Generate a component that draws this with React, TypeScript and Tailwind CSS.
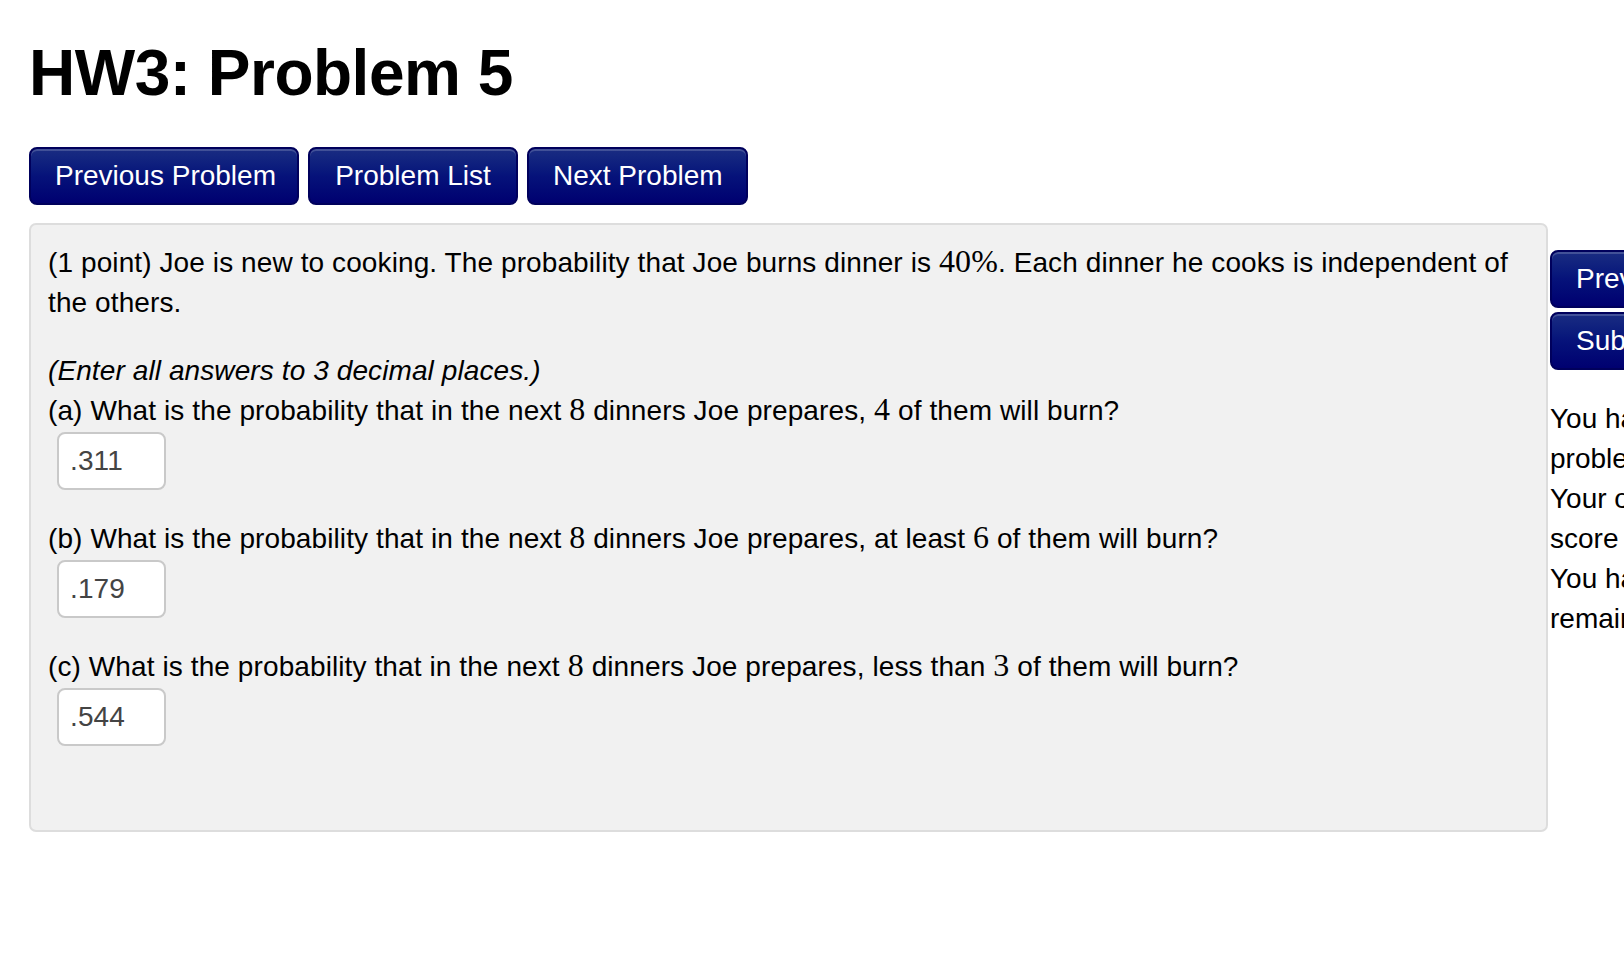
import React from "react";

const btn =
  "h-[58px] px-[24px] text-[28px] leading-[34px] text-white rounded-[8px] border-2 border-[#00005c] bg-linear-to-b from-[#1a2c82] via-[#06127a] to-[#000070] shadow-[inset_0_2px_0_rgba(255,255,255,0.18)] whitespace-nowrap";

function M({ children }: { children: React.ReactNode }) {
  return (
    <span className="text-[32px] leading-none" style={{ fontFamily: '"Liberation Serif", "DejaVu Serif", serif' }}>
      {children}
    </span>
  );
}

function Answer({ value }: { value: string }) {
  return (
    <div className="ml-[9px] mt-[1px] w-[109px] h-[58px] rounded-[8px] border-2 border-[#c9c9c9] bg-white flex items-center pl-[11px] text-[28px] text-[#444]">
      {value}
    </div>
  );
}

export default function App() {
  return (
    <div
      className="w-[1624px] h-[954px] overflow-hidden bg-white text-black"
      style={{ fontFamily: '"Liberation Sans", Arial, Helvetica, sans-serif' }}
    >
      <div className="pl-[29px] flex flex-col">
        <h1 className="mt-[41px] text-[64px] leading-[64px] font-bold tracking-[-0.5px]">HW3: Problem 5</h1>
        <div className="mt-[42px] flex gap-[9px]">
          <button className={btn + " w-[270px]"}>Previous Problem</button>
          <button className={btn + " w-[210px]"}>Problem List</button>
          <button className={btn + " w-[221px]"}>Next Problem</button>
        </div>
        <div className="mt-[18px] flex items-start">
          <div className="w-[1519px] h-[609px] shrink-0 bg-[#f1f1f1] border-2 border-[#dddddd] rounded-[7px] pt-[18px] px-[17px] text-[28px] leading-[40px] tracking-[0.1px]">
            <p>
              (1 point) Joe is new to cooking. The probability that Joe burns dinner is <M>40%</M>. Each dinner he cooks is independent of
              <br />
              the others.
            </p>
            <p className="mt-[28px] italic">(Enter all answers to 3 decimal places.)</p>
            <p>
              (a) What is the probability that in the next <M>8</M> dinners Joe prepares, <M>4</M> of them will burn?
            </p>
            <Answer value=".311" />
            <p className="mt-[29px]">
              (b) What is the probability that in the next <M>8</M> dinners Joe prepares, at least <M>6</M> of them will burn?
            </p>
            <Answer value=".179" />
            <p className="mt-[29px]">
              (c) What is the probability that in the next <M>8</M> dinners Joe prepares, less than <M>3</M> of them will burn?
            </p>
            <Answer value=".544" />
          </div>
          <div className="ml-[2px] mt-[27px] flex flex-col shrink-0">
            <button className={btn + " w-[220px] text-left"}>Preview My Answers</button>
            <button className={btn + " mt-[4px] w-[220px] text-left"}>Submit Answers</button>
            <div className="mt-[29px] text-[28px] leading-[40px] whitespace-nowrap">
              <div>You have attempted this</div>
              <div>problem 0 times.</div>
              <div>Your overall recorded</div>
              <div>score is 0%.</div>
              <div>You have unlimited</div>
              <div>remaining attempts.</div>
            </div>
          </div>
        </div>
      </div>
    </div>
  );
}
